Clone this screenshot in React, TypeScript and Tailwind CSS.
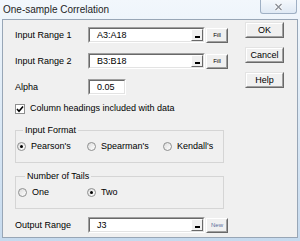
import React from "react";

function Sunken({ w, value, refBtn }: { w: number; value: string; refBtn?: boolean }) {
  return (
    <div
      className="h-[16px] border border-t-[#a0a0a0] border-l-[#a0a0a0] border-r-white border-b-white"
      style={{ width: w }}
    >
      <div className="h-full border border-t-[#696969] border-l-[#696969] border-r-[#e3e3e3] border-b-[#e3e3e3] bg-white flex items-center">
        <span className="pl-[7px] text-[9px] leading-none text-black">{value}</span>
        {refBtn && (
          <div className="ml-auto mr-[0px] w-[12px] h-[12px] bg-[#f0f0f0] border border-t-white border-l-white border-r-[#696969] border-b-[#696969] flex items-end justify-center">
            <div className="w-[5px] h-[2px] bg-black mb-[2px]" />
          </div>
        )}
      </div>
    </div>
  );
}

function SmallBtn({ label, blue }: { label: string; blue?: boolean }) {
  return (
    <div className="ml-[1px] w-[22px] h-[15px] bg-[#f0f0f0] border border-t-white border-l-white border-r-[#696969] border-b-[#696969]">
      <div className="h-full border border-transparent border-r-[#a0a0a0] border-b-[#a0a0a0] flex items-center justify-center">
        <span className={`text-[6px] leading-none ${blue ? "text-[#5a6f9c]" : "text-black"}`}>{label}</span>
      </div>
    </div>
  );
}

function BigBtn({ label }: { label: string }) {
  return (
    <div className="w-[39px] h-[16px] bg-[#f0f0f0] border border-t-[#e3e3e3] border-l-[#e3e3e3] border-r-[#696969] border-b-[#696969]">
      <div className="h-full border border-t-white border-l-white border-r-[#a0a0a0] border-b-[#a0a0a0] flex items-center justify-center">
        <span className="text-[9px] leading-none text-black">{label}</span>
      </div>
    </div>
  );
}

function Radio({ label, checked, w }: { label: string; checked?: boolean; w: number }) {
  return (
    <div className="flex items-center h-[11px] shrink-0" style={{ width: w }}>
      <div className="w-[9px] h-[9px] rounded-full border border-[#8e8f8f] bg-gradient-to-br from-[#dcdcdc] to-white flex items-center justify-center">
        {checked && <div className="w-[3px] h-[3px] rounded-full bg-black" />}
      </div>
      <span className="ml-[5px] text-[9px] leading-none text-black">{label}</span>
    </div>
  );
}

function Group({
  title,
  children,
  titleMl,
}: {
  title: string;
  children: React.ReactNode;
  titleMl: string;
}) {
  return (
    <div className="w-[209px] h-[33px] border border-[#d5d5d5] flex flex-col">
      <span className={`-mt-[6px] ${titleMl} px-[2px] w-fit bg-[#f0f0f0] text-[9px] leading-[11px] text-black`}>
        {title}
      </span>
      <div className="mt-[5px] flex items-center pl-[1px]">{children}</div>
    </div>
  );
}

function Row({ label, children, mt }: { label: string; children: React.ReactNode; mt: string }) {
  return (
    <div className={`${mt} flex items-center h-[16px]`}>
      <span className="w-[73px] text-[9px] leading-none text-black">{label}</span>
      {children}
    </div>
  );
}

export default function App() {
  return (
    <div className="w-[300px] h-[241px] overflow-hidden flex flex-col bg-gradient-to-b from-[#f2f7fc] via-[#dbe9f6] to-[#c6daee] font-['Liberation_Sans',Arial,sans-serif]">
      <div className="h-[19px] flex justify-between shrink-0">
        <span className="pl-[3px] pt-[4px] text-[10px] leading-[12px] text-[#1e1e1e]">
          One-sample Correlation
        </span>
        <div className="mr-[3px] w-[37px] h-[14px] rounded-b-[3px] border border-t-0 border-[#9fb0c4] bg-gradient-to-b from-[#f4f8fc] to-[#dfe9f4] flex items-center justify-center">
          <svg width="9" height="8" viewBox="0 0 9 8">
            <path d="M1.5 1 L7.5 7 M7.5 1 L1.5 7" stroke="#ffffff" strokeWidth="3" />
            <path d="M1.5 1 L7.5 7 M7.5 1 L1.5 7" stroke="#8a8f97" strokeWidth="1.4" />
          </svg>
        </div>
      </div>
      <div className="ml-[2px] w-[296px] h-[219px] border border-[#98a6b6] bg-[#f0f0f0] flex">
        <div className="w-[225px] pl-[12px] flex flex-col">
          <Row label="Input Range 1" mt="mt-[7px]">
            <Sunken w={117} value="A3:A18" refBtn />
            <SmallBtn label="Fill" />
          </Row>
          <Row label="Input Range 2" mt="mt-[10px]">
            <Sunken w={117} value="B3:B18" refBtn />
            <SmallBtn label="Fill" />
          </Row>
          <Row label="Alpha" mt="mt-[10px]">
            <Sunken w={38} value="0.05" />
          </Row>
          <div className="mt-[8px] h-[11px] flex items-center">
            <div className="w-[10px] h-[10px] border border-[#8e8f8f] bg-white flex items-center justify-center">
              <svg width="8" height="8" viewBox="0 0 8 8">
                <path d="M1 4 L3 6.2 L7 1.5" fill="none" stroke="#000" strokeWidth="1.6" />
              </svg>
            </div>
            <span className="ml-[5px] text-[9px] leading-none text-black">
              Column headings included with data
            </span>
          </div>
          <div className="mt-[16px]">
            <Group title="Input Format" titleMl="ml-[7px]">
              <Radio label="Pearson's" checked w={70} />
              <Radio label="Spearman's" w={76} />
              <Radio label="Kendall's" w={55} />
            </Group>
          </div>
          <div className="mt-[13px]">
            <Group title="Number of Tails" titleMl="ml-[9px]">
              <div className="pl-[1px] flex">
                <Radio label="One" w={69} />
                <Radio label="Two" checked w={60} />
              </div>
            </Group>
          </div>
          <Row label="Output Range" mt="mt-[8px]">
            <Sunken w={117} value="J3" refBtn />
            <SmallBtn label="New" blue />
          </Row>
        </div>
        <div className="ml-[17px] pt-[2px] flex flex-col gap-[9px]">
          <BigBtn label="OK" />
          <BigBtn label="Cancel" />
          <BigBtn label="Help" />
        </div>
      </div>
    </div>
  );
}
